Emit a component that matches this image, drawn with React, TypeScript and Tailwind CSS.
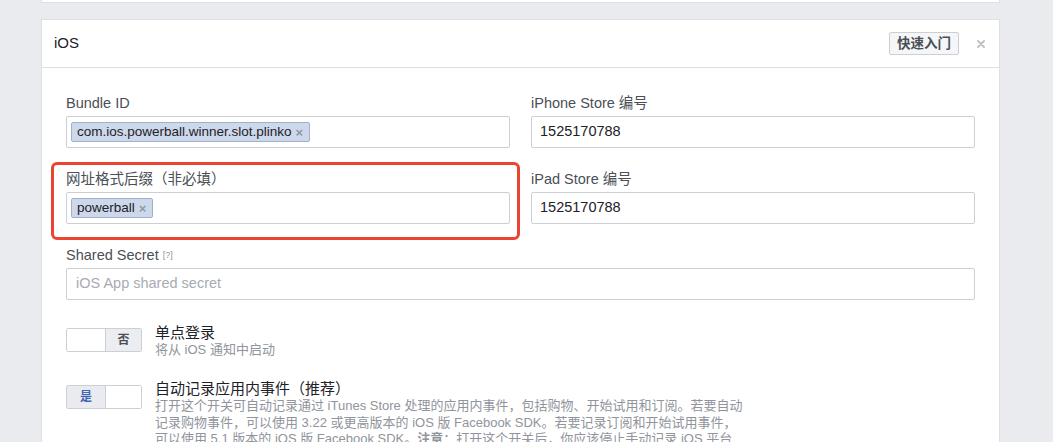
import React from 'react';

const FONT = { fontFamily: '"Liberation Sans", "Noto Sans CJK SC", sans-serif' };

function Chip({ text }: { text: string }) {
  return (
    <span className="inline-flex items-center h-[20px] pl-[5px] pr-[6px] bg-[#cdd8ea] border border-[#9fb1cf] rounded-[2px] text-[13.5px] text-[#1d2129] leading-none">
      {text}
      <span className="ml-[4px] text-[13px] text-[#8f98a8] font-bold">×</span>
    </span>
  );
}

function Field({
  label,
  hint,
  children,
}: {
  label: string;
  hint?: string;
  children: React.ReactNode;
}) {
  return (
    <div className="flex flex-col">
      <div className="h-[18px] leading-[18px] text-[14.5px] text-[#4b4f56] mb-[4px]">
        {label}
        {hint && <span className="ml-[4px] text-[9px] text-[#90949c] align-top">{hint}</span>}
      </div>
      <div className="h-[32px] border border-[#ccd0d5] rounded-[2px] bg-white flex items-center px-[4px]">
        {children}
      </div>
    </div>
  );
}

function Toggle({ on }: { on: boolean }) {
  return (
    <div className="flex w-[76px] h-[24px] border border-[#ccd0d5] rounded-[2px] overflow-hidden shrink-0 text-[12px] font-bold">
      {on ? (
        <>
          <div className="w-[39px] bg-[#e9ebf0] border-r border-[#ccd0d5] flex items-center justify-center text-[#4267b2]">是</div>
          <div className="flex-1 bg-white" />
        </>
      ) : (
        <>
          <div className="w-[39px] bg-white border-r border-[#ccd0d5]" />
          <div className="flex-1 bg-[#ebedf0] flex items-center justify-center text-[#4b4f56]">否</div>
        </>
      )}
    </div>
  );
}

export default function App() {
  return (
    <div className="min-h-screen bg-[#e9ebee] pb-[40px]" style={FONT}>
      {/* previous card, only its bottom edge shows */}
      <div className="ml-[41px] w-[959px] h-[3px] bg-white border-x border-b border-[#dddfe2]" />

      <div className="ml-[41px] w-[959px] mt-[16px] bg-white border border-[#dddfe2]">
        {/* header */}
        <div className="h-[48px] flex items-center pl-[12px] pr-[14px] border-b border-[#dddfe2]">
          <span className="text-[15px] text-[#1d2129]">iOS</span>
          <div className="ml-auto flex items-center">
            <button className="h-[23px] px-[7px] bg-[#f5f6f7] border border-[#ccd0d5] rounded-[2px] text-[13.5px] font-bold text-[#4b4f56] leading-none">
              快速入门
            </button>
            <svg className="ml-[18px]" width="8" height="8" viewBox="0 0 8 8">
              <path d="M1 1L7 7M7 1L1 7" stroke="#bec3c9" strokeWidth="2" strokeLinecap="round" />
            </svg>
          </div>
        </div>

        {/* body */}
        <div className="pt-[26px] pl-[24px] pr-[24px]">
          <div className="grid grid-cols-2 gap-x-[21px] gap-y-[22px]">
            <Field label="Bundle ID">
              <Chip text="com.ios.powerball.winner.slot.plinko" />
            </Field>
            <Field label="iPhone Store 编号">
              <span className="px-[4px] text-[14.5px] text-[#1d2129]">1525170788</span>
            </Field>
            <div className="relative">
              <Field label="网址格式后缀（非必填）">
                <Chip text="powerball" />
              </Field>
              <div className="absolute -left-[15px] -top-[8px] -right-[10px] -bottom-[16px] border-[3px] border-[#eb4431] rounded-[6px] pointer-events-none" />
            </div>
            <Field label="iPad Store 编号">
              <span className="px-[4px] text-[14.5px] text-[#1d2129]">1525170788</span>
            </Field>
            <div className="col-span-2">
              <Field label="Shared Secret" hint="[?]">
                <span className="px-[5px] text-[14.5px] text-[#a7abb2]">iOS App shared secret</span>
              </Field>
            </div>
          </div>

          <div className="mt-[24px] flex flex-col gap-[22px]">
            <div className="flex items-start">
              <div className="mt-[4px]">
                <Toggle on={false} />
              </div>
              <div className="ml-[13px]">
                <div className="text-[15px] leading-[18px] text-[#1d2129]">单点登录</div>
                <div className="text-[13px] leading-[16px] text-[#90949c]">将从 iOS 通知中启动</div>
              </div>
            </div>

            <div className="flex items-start">
              <div className="mt-[5px]">
                <Toggle on={true} />
              </div>
              <div className="ml-[13px]">
                <div className="text-[15px] leading-[18px] text-[#1d2129]">自动记录应用内事件（推荐）</div>
                <div className="text-[13px] leading-[16.5px] text-[#90949c] whitespace-nowrap">
                  <div>打开这个开关可自动记录通过 iTunes Store 处理的应用内事件，包括购物、开始试用和订阅。若要自动</div>
                  <div>记录购物事件，可以使用 3.22 或更高版本的 iOS 版 Facebook SDK。若要记录订阅和开始试用事件，</div>
                  <div>
                    可以使用 5.1 版本的 iOS 版 Facebook SDK。<span className="font-bold">注意</span>：打开这个开关后，你应该停止手动记录 iOS 平台
                  </div>
                  <div>上的应用内购买事件，以免重复记录。</div>
                </div>
              </div>
            </div>
          </div>
          <div className="h-[24px]" />
        </div>
      </div>
    </div>
  );
}
